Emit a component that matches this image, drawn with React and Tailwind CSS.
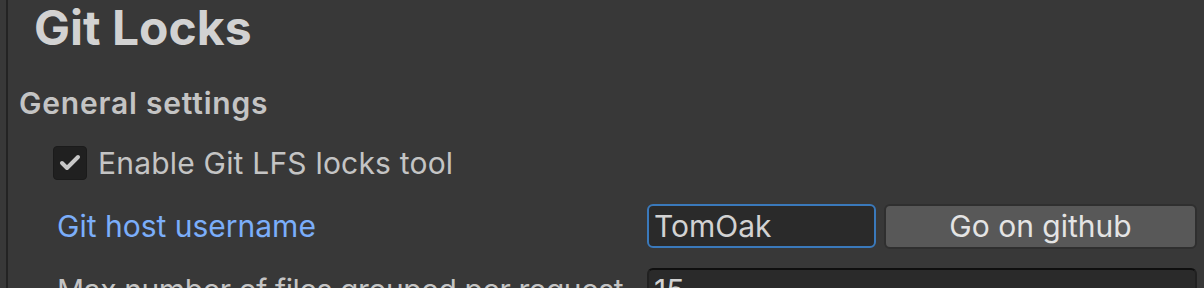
import { Check } from 'lucide-react'

function Row({ label, labelClass = 'text-[#c4c4c4]', children }) {
  return (
    <div className="flex items-center h-[46px]">
      <div className={`w-[639px] shrink-0 pl-[49px] text-[30px] leading-[36px] whitespace-nowrap overflow-hidden ${labelClass}`}>{label}</div>
      <div className="flex-1 flex items-center gap-[8px] pr-[7px]">{children}</div>
    </div>
  )
}

export default function App() {
  return (
    <div className="w-[1204px] h-[288px] bg-[#383838] overflow-hidden flex font-['Inter','Noto_Sans',sans-serif]">
      <div className="w-[6px] shrink-0" />
      <div className="w-[2px] shrink-0 bg-[#232323]" />
      <div className="flex-1 min-w-0">
        <h1 className="ml-[26px] text-[48px] font-bold text-[#d2d2d2] leading-[56px]">Git Locks</h1>
        <h2 className="ml-[11px] mt-[30px] text-[30px] font-semibold tracking-[0.8px] text-[#c4c4c4] leading-[34px]">General settings</h2>

        <div className="mt-[25px] flex items-center pl-[45px] h-[36px]">
          <div className="w-[34px] h-[34px] rounded-[4px] bg-[#202020] border border-[#1b1b1b] flex items-center justify-center">
            <Check className="w-[24px] h-[24px] text-[#c8c8c8]" strokeWidth={4} />
          </div>
          <span className="ml-[11px] text-[30px] tracking-[0.2px] leading-[36px] text-[#c4c4c4] whitespace-nowrap">Enable Git LFS locks tool</span>
        </div>

        <div className="mt-[22px]">
          <Row label="Git host username" labelClass="text-[#7baefa]">
            <div className="w-[229px] h-[44px] rounded-[6px] border-2 border-[#3a79bb] bg-[#2a2a2a] flex items-center px-[5px] text-[30px] leading-[36px] text-[#d2d2d2]">TomOak</div>
            <button className="flex-1 h-[45px] rounded-[6px] border-2 border-[#2f2f2f] bg-[#585858] text-[30px] leading-[36px] text-[#e4e4e4]">Go on github</button>
          </Row>
        </div>

        <div className="mt-[18px]">
          <Row label={<span className="tracking-[-0.4px]">Max number of files grouped per request</span>}>
            <div className="flex-1 h-[44px] rounded-[6px] border-2 border-[#212121] border-t-[#0f0f0f] bg-[#2a2a2a] flex items-center px-[5px] text-[30px] leading-[36px] text-[#d2d2d2]">15</div>
          </Row>
        </div>
      </div>
    </div>
  )
}
